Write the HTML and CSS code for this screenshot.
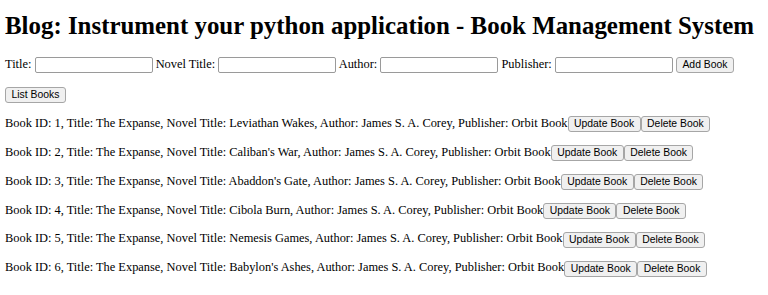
FILE: index.html
```html
<!DOCTYPE html>
<html>
<head>
<meta charset="utf-8">
<title>Book Management System</title>
<link rel="stylesheet" href="styles.css">
</head>
<body>
<h1 class="title">Blog: Instrument your python application - Book Management System</h1>
<form class="add-form">
<label>Title: <input type="text" class="field"></label>
<label>Novel Title: <input type="text" class="field"></label>
<label>Author: <input type="text" class="field"></label>
<label>Publisher: <input type="text" class="field"></label>
<button type="button" class="btn">Add Book</button>
</form>
<div class="list-row"><button type="button" class="btn">List Books</button></div>
<div class="books">
<p class="book">Book ID: 1, Title: The Expanse, Novel Title: Leviathan Wakes, Author: James S. A. Corey, Publisher: Orbit Book<button type="button" class="btn">Update Book</button><button type="button" class="btn">Delete Book</button></p>
<p class="book">Book ID: 2, Title: The Expanse, Novel Title: Caliban's War, Author: James S. A. Corey, Publisher: Orbit Book<button type="button" class="btn">Update Book</button><button type="button" class="btn">Delete Book</button></p>
<p class="book">Book ID: 3, Title: The Expanse, Novel Title: Abaddon's Gate, Author: James S. A. Corey, Publisher: Orbit Book<button type="button" class="btn">Update Book</button><button type="button" class="btn">Delete Book</button></p>
<p class="book">Book ID: 4, Title: The Expanse, Novel Title: Cibola Burn, Author: James S. A. Corey, Publisher: Orbit Book<button type="button" class="btn">Update Book</button><button type="button" class="btn">Delete Book</button></p>
<p class="book">Book ID: 5, Title: The Expanse, Novel Title: Nemesis Games, Author: James S. A. Corey, Publisher: Orbit Book<button type="button" class="btn">Update Book</button><button type="button" class="btn">Delete Book</button></p>
<p class="book">Book ID: 6, Title: The Expanse, Novel Title: Babylon's Ashes, Author: James S. A. Corey, Publisher: Orbit Book<button type="button" class="btn">Update Book</button><button type="button" class="btn">Delete Book</button></p>
</div>
</body>
</html>
```
FILE: styles.css
```css
html, body {
  margin: 0;
  padding: 0;
  background: #ffffff;
}
body {
  padding: 0 5px;
  font-family: "Liberation Serif", "Times New Roman", serif;
  font-size: 12.4px;
  color: #000000;
}
.title {
  margin: 11px 0 0 0;
  font-size: 24.9px;
  font-weight: bold;
  line-height: 29px;
  white-space: nowrap;
}
.add-form {
  margin: 15px 0 0 0;
  line-height: 18px;
  height: 18px;
}
.field {
  box-sizing: border-box;
  width: 118px;
  height: 16px;
  margin: 0;
  padding: 0 2px;
  border: 1px solid #9a9a9a;
  border-radius: 2px;
  font-size: 10px;
  vertical-align: middle;
}
.btn {
  box-sizing: border-box;
  height: 16px;
  margin: 0;
  padding: 0 5.5px;
  font-family: "Liberation Sans", Arial, sans-serif;
  font-size: 10.4px;
  line-height: 14px;
  color: #000000;
  background: #f0f0f0;
  border: 1px solid #a6a6a6;
  border-radius: 3px;
  vertical-align: middle;
}
.list-row {
  margin: 12px 0 0 0;
  line-height: 18px;
}
.books {
  margin-top: 10.5px;
}
.book {
  margin: 0 0 10.8px 0;
  line-height: 18px;
  white-space: nowrap;
}
```
